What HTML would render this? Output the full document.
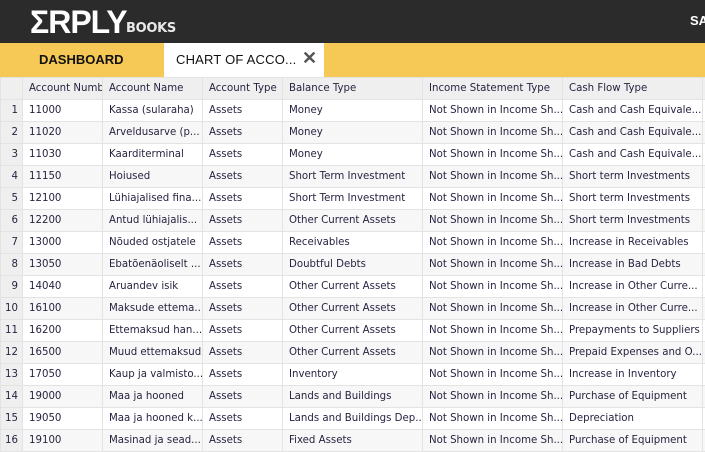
<!DOCTYPE html>
<html><head><style>
*{margin:0;padding:0;box-sizing:border-box}
body{width:705px;height:451px;overflow:hidden;background:#fff;font-family:"DejaVu Sans","Liberation Sans",sans-serif;}
.top{position:absolute;left:0;top:0;width:705px;height:43px;background:#2b2b2b}
.logo{position:absolute;left:30px;top:4px;color:#fff;font:bold 32px "Liberation Sans",sans-serif;letter-spacing:-1px}
.books{position:absolute;left:126px;top:21px;color:#e8e8e8;font:900 13px "DejaVu Sans",sans-serif;letter-spacing:-0.3px}
.sa{position:absolute;left:690px;top:13px;color:#fff;font:bold 13px "Liberation Sans",sans-serif}
.bar{position:absolute;left:0;top:43px;width:705px;height:34px;background:#f6c956}
.t1{position:absolute;left:39px;top:52px;font:bold 13px "Liberation Sans",sans-serif;color:#111}
.tab{position:absolute;left:164px;top:43px;width:160px;height:34px;background:#fff}
.t2{position:absolute;left:176px;top:52px;font:13px "Liberation Sans",sans-serif;color:#111;letter-spacing:.2px}
.x{position:absolute;left:302px;top:48px;font:bold 18px "Liberation Sans",sans-serif;color:#555}
table{position:absolute;left:0;top:77px;border-collapse:collapse;table-layout:fixed;width:722px}
td{height:22px;border:1px solid #e3e3e3;font-size:10.2px;color:#2a2240;padding:0 6px;white-space:nowrap;overflow:hidden;line-height:20px}
tr{height:22px}
tr.h td{background:#efefef}
tr:nth-child(odd):not(.h) td{background:#f7f7f7}
td.n{background:#efefef!important;text-align:right;padding:0 4px}
</style></head><body>
<div class="top"><div class="logo">ƩRPLY</div><div class="books">BOOKS</div><div class="sa">SA</div></div>
<div class="bar"></div><div class="t1">DASHBOARD</div>
<div class="tab"></div><div class="t2">CHART OF ACCO...</div><div class="x">✕</div>
<table>
<colgroup><col style="width:22px"><col style="width:80px"><col style="width:100px"><col style="width:80px"><col style="width:140px"><col style="width:140px"><col style="width:140px"><col style="width:20px"></colgroup>
<tr class="h"><td class="n"></td><td>Account Numbe</td><td>Account Name</td><td>Account Type</td><td>Balance Type</td><td>Income Statement Type</td><td>Cash Flow Type</td><td></td></tr>
<tr><td class="n">1</td><td>11000</td><td>Kassa (sularaha)</td><td>Assets</td><td>Money</td><td>Not Shown in Income Sh...</td><td>Cash and Cash Equivale...</td><td></td></tr>
<tr><td class="n">2</td><td>11020</td><td>Arveldusarve (p...</td><td>Assets</td><td>Money</td><td>Not Shown in Income Sh...</td><td>Cash and Cash Equivale...</td><td></td></tr>
<tr><td class="n">3</td><td>11030</td><td>Kaarditerminal</td><td>Assets</td><td>Money</td><td>Not Shown in Income Sh...</td><td>Cash and Cash Equivale...</td><td></td></tr>
<tr><td class="n">4</td><td>11150</td><td>Hoiused</td><td>Assets</td><td>Short Term Investment</td><td>Not Shown in Income Sh...</td><td>Short term Investments</td><td></td></tr>
<tr><td class="n">5</td><td>12100</td><td>Lühiajalised fina...</td><td>Assets</td><td>Short Term Investment</td><td>Not Shown in Income Sh...</td><td>Short term Investments</td><td></td></tr>
<tr><td class="n">6</td><td>12200</td><td>Antud lühiajalis...</td><td>Assets</td><td>Other Current Assets</td><td>Not Shown in Income Sh...</td><td>Short term Investments</td><td></td></tr>
<tr><td class="n">7</td><td>13000</td><td>Nõuded ostjatele</td><td>Assets</td><td>Receivables</td><td>Not Shown in Income Sh...</td><td>Increase in Receivables</td><td></td></tr>
<tr><td class="n">8</td><td>13050</td><td>Ebatõenäoliselt ...</td><td>Assets</td><td>Doubtful Debts</td><td>Not Shown in Income Sh...</td><td>Increase in Bad Debts</td><td></td></tr>
<tr><td class="n">9</td><td>14040</td><td>Aruandev isik</td><td>Assets</td><td>Other Current Assets</td><td>Not Shown in Income Sh...</td><td>Increase in Other Curre...</td><td></td></tr>
<tr><td class="n">10</td><td>16100</td><td>Maksude ettema...</td><td>Assets</td><td>Other Current Assets</td><td>Not Shown in Income Sh...</td><td>Increase in Other Curre...</td><td></td></tr>
<tr><td class="n">11</td><td>16200</td><td>Ettemaksud han...</td><td>Assets</td><td>Other Current Assets</td><td>Not Shown in Income Sh...</td><td>Prepayments to Suppliers</td><td></td></tr>
<tr><td class="n">12</td><td>16500</td><td>Muud ettemaksud</td><td>Assets</td><td>Other Current Assets</td><td>Not Shown in Income Sh...</td><td>Prepaid Expenses and O...</td><td></td></tr>
<tr><td class="n">13</td><td>17050</td><td>Kaup ja valmisto...</td><td>Assets</td><td>Inventory</td><td>Not Shown in Income Sh...</td><td>Increase in Inventory</td><td></td></tr>
<tr><td class="n">14</td><td>19000</td><td>Maa ja hooned</td><td>Assets</td><td>Lands and Buildings</td><td>Not Shown in Income Sh...</td><td>Purchase of Equipment</td><td></td></tr>
<tr><td class="n">15</td><td>19050</td><td>Maa ja hooned k...</td><td>Assets</td><td>Lands and Buildings Dep...</td><td>Not Shown in Income Sh...</td><td>Depreciation</td><td></td></tr>
<tr><td class="n">16</td><td>19100</td><td>Masinad ja sead...</td><td>Assets</td><td>Fixed Assets</td><td>Not Shown in Income Sh...</td><td>Purchase of Equipment</td><td></td></tr>
</table>
</body></html>
